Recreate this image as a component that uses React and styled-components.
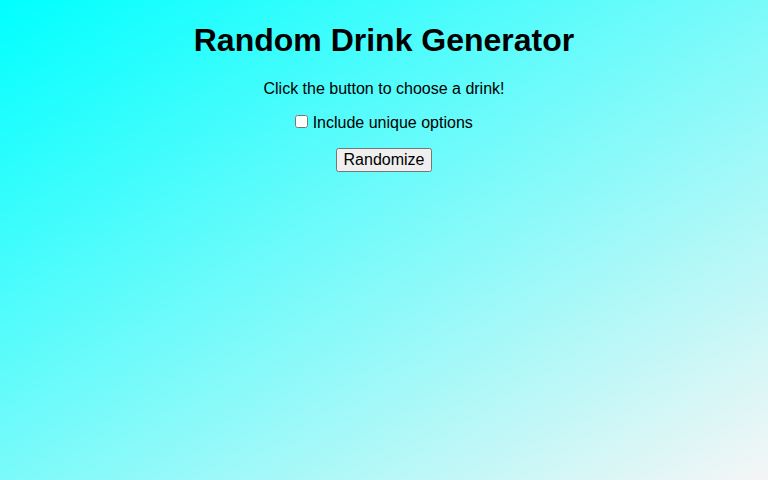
import React from "react";
import styled, { createGlobalStyle } from "styled-components";

const Global = createGlobalStyle`
  html {
    min-height: 100%;
    background: linear-gradient(to bottom right, #00ffff, #f5f5f5);
  }
  body {
    margin: 0;
    min-height: 100vh;
    font-family: "Liberation Sans", Arial, sans-serif;
    color: #000;
  }
`;

const Page = styled.main`
  text-align: center;
  padding: 0.1px 8px;
`;

const Title = styled.h1`
  font-size: 32px;
  font-weight: bold;
  margin: 21.44px 0;
`;

const Text = styled.p`
  font-size: 16px;
  margin: 16px 0;
`;

const OptionRow = styled.div`
  font-size: 16px;
  margin: 16px 0;
`;

const Check = styled.input`
  margin: 0 0 3px 0;
`;

const Button = styled.button`
  font-family: "Liberation Sans", Arial, sans-serif;
  font-size: 16px;
`;

export default function App() {
  return (
    <>
      <Global />
      <Page>
        <Title>Random Drink Generator</Title>
        <Text>Click the button to choose a drink!</Text>
        <OptionRow>
          <label>
            <Check type="checkbox" /> Include unique options
          </label>
        </OptionRow>
        <Button>Randomize</Button>
      </Page>
    </>
  );
}
